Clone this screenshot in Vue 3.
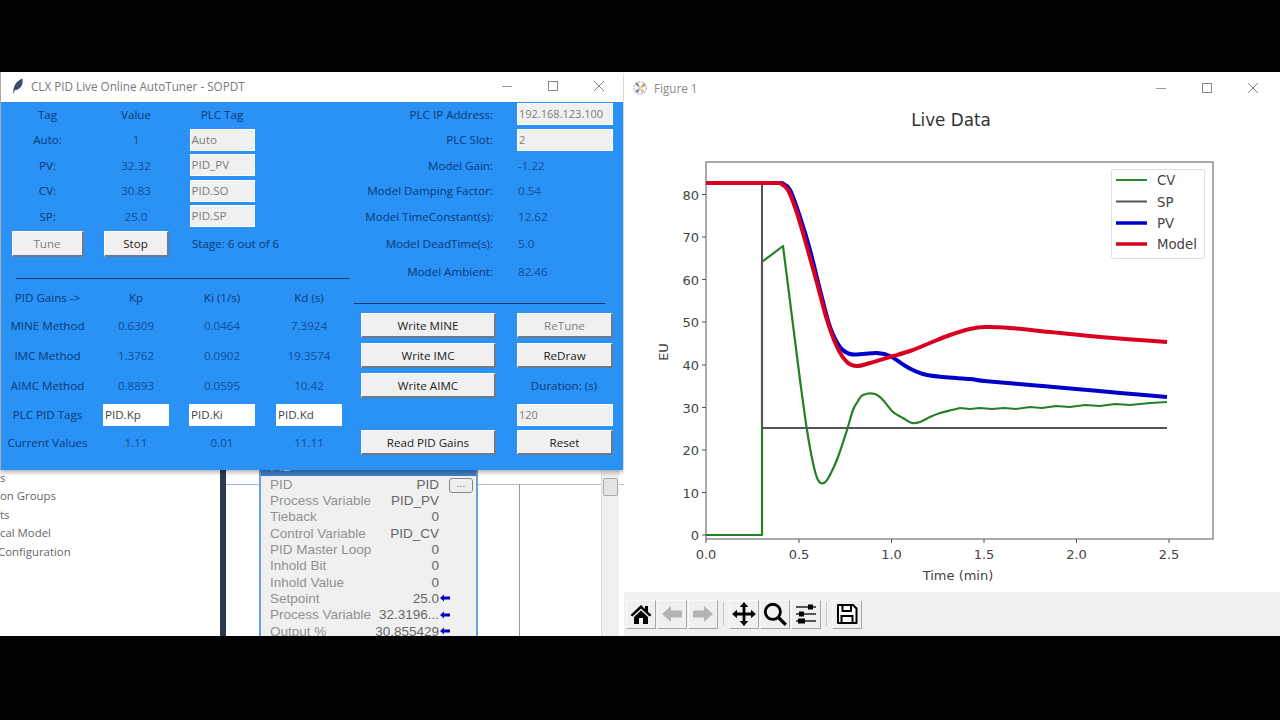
<script setup>
const yTicks = [
  { label: '0', y: 535 },
  { label: '10', y: 492.5 },
  { label: '20', y: 450 },
  { label: '30', y: 407.5 },
  { label: '40', y: 365 },
  { label: '50', y: 322 },
  { label: '60', y: 279.5 },
  { label: '70', y: 237 },
  { label: '80', y: 194.5 }
]
const xTicks = [
  { label: '0.0', x: 706 },
  { label: '0.5', x: 799 },
  { label: '1.0', x: 891.5 },
  { label: '1.5', x: 984 },
  { label: '2.0', x: 1076.5 },
  { label: '2.5', x: 1169 }
]

// catmull-rom through the points, so the traces don't look like polylines
const smooth = (str) => {
  const pts = str.split(' ').map((p) => p.split(',').map(Number))
  let d = ''
  for (let i = 0; i < pts.length - 1; i++) {
    const p0 = pts[i - 1] || pts[i]
    const p1 = pts[i]
    const p2 = pts[i + 1]
    const p3 = pts[i + 2] || p2
    const c1 = [p1[0] + (p2[0] - p0[0]) / 6, p1[1] + (p2[1] - p0[1]) / 6]
    const c2 = [p2[0] - (p3[0] - p1[0]) / 6, p2[1] - (p3[1] - p1[1]) / 6]
    d += ` C${c1[0]},${c1[1]} ${c2[0]},${c2[1]} ${p2[0]},${p2[1]}`
  }
  return d
}

const cvPath = 'M706,535 H762 V262 L783,246 L800,380' + smooth('800,380 807,430 813,463 818,480 824,483 830,475 838,457 847,430 853,410 858,401 863,395 875,394 883,400 893,412 903,418 912,423 920,422 930,417 940,413 952,410 960,408') +
  ' L970,409 980,408 992,409 1004,408 1016,409 1030,407 1042,408 1056,406 1070,407 1085,405 1100,406 1115,404 1130,405 1150,403 1167,402'
const spPath = 'M762,183 V428 H1167'
const pvPath = 'M706,183 H782' + smooth('782,183 790,190 800,217 810,250 820,290 830,327 840,347 850,354 863,354 877,353 890,356 907,367 923,374 943,377 970,379 984,381 1030,385 1076,389 1120,393 1167,397')
const modelPath = 'M706,183 H780' + smooth('780,183 788,190 797,213 807,247 817,283 827,320 837,347 847,362 857,366 870,363 890,357 910,351 930,343 950,335 970,329 985,327 1010,328 1050,332 1100,337 1167,342')

const legend = [
  { label: 'CV', color: '#2a8a2a', width: 2, y: 180 },
  { label: 'SP', color: '#555', width: 2, y: 201.5 },
  { label: 'PV', color: '#0000c8', width: 3.5, y: 223 },
  { label: 'Model', color: '#d80020', width: 3.5, y: 244 }
]

const propRows = [
  { label: 'PID', value: 'PID' },
  { label: 'Process Variable', value: 'PID_PV' },
  { label: 'Tieback', value: '0' },
  { label: 'Control Variable', value: 'PID_CV' },
  { label: 'PID Master Loop', value: '0' },
  { label: 'Inhold Bit', value: '0' },
  { label: 'Inhold Value', value: '0' },
  { label: 'Setpoint', value: '25.0', live: true },
  { label: 'Process Variable', value: '32.3196...', live: true },
  { label: 'Output %', value: '30.855429', live: true }
]
</script>

<template>
  <div class="screen">
    <div class="desktop">
      <!-- studio window behind the tuner -->
      <div class="studio">
        <div class="tree">
          <div>s</div>
          <div>on Groups</div>
          <div>ts</div>
          <div>cal Model</div>
          <div class="tree-cut">Configuration</div>
        </div>
        <div class="splitter"></div>
        <div class="gutter"></div>
        <div class="props">
          <div class="props-head">PID</div>
          <div v-for="p in propRows" :key="p.label + p.value" class="prop-row">
            <span class="prop-label">{{ p.label }}</span>
            <span class="prop-value">{{ p.value }}</span>
            <svg v-if="p.live" class="prop-arrow" viewBox="0 0 10 8" width="10" height="8">
              <path d="M0 4 L4 0.5 V2.5 H10 V5.5 H4 V7.5 Z" fill="#0000c0" />
            </svg>
          </div>
          <div class="dots">...</div>
        </div>
        <div class="ladder">
          <div class="rung"></div>
          <div class="rail"></div>
          <div class="scroll"><div class="thumb"></div></div>
        </div>
      </div>

      <!-- tuner window -->
      <div class="tuner">
        <div class="titlebar">
          <svg class="app-icon" viewBox="0 0 12 16" width="12" height="16">
            <path d="M1.5 15.5 C0.8 10 3 3 10.5 0.5 C11.5 6 9 11 4 12 L2.8 12 L1.9 15.5 Z" fill="#34506e" />
          </svg>
          <span class="title-text">CLX PID Live Online AutoTuner - SOPDT</span>
          <div class="controls">
            <svg viewBox="0 0 46 16" width="46" height="16"><path d="M18 8.5 H28" stroke="#999" fill="none" /></svg>
            <svg viewBox="0 0 46 16" width="46" height="16"><rect x="18.5" y="3.5" width="9" height="9" stroke="#888" fill="none" /></svg>
            <svg viewBox="0 0 46 16" width="46" height="16"><path d="M18 3 L28 13 M28 3 L18 13" stroke="#888" fill="none" /></svg>
          </div>
        </div>
        <div class="tuner-grid">
          <div class="cell">Tag</div>
          <div class="cell">Value</div>
          <div class="cell">PLC Tag</div>
          <div></div>
          <div class="cell right">PLC IP Address:</div>
          <div class="cell"><div class="entry wide">192.168.123.100</div></div>

          <div class="cell">Auto:</div>
          <div class="cell val">1</div>
          <div class="cell"><div class="entry">Auto</div></div>
          <div></div>
          <div class="cell right">PLC Slot:</div>
          <div class="cell"><div class="entry wide">2</div></div>

          <div class="cell">PV:</div>
          <div class="cell val">32.32</div>
          <div class="cell"><div class="entry">PID_PV</div></div>
          <div></div>
          <div class="cell right">Model Gain:</div>
          <div class="cell left val">-1.22</div>

          <div class="cell">CV:</div>
          <div class="cell val">30.83</div>
          <div class="cell"><div class="entry">PID.SO</div></div>
          <div></div>
          <div class="cell right">Model Damping Factor:</div>
          <div class="cell left val">0.54</div>

          <div class="cell">SP:</div>
          <div class="cell val">25.0</div>
          <div class="cell"><div class="entry">PID.SP</div></div>
          <div></div>
          <div class="cell right">Model TimeConstant(s):</div>
          <div class="cell left val">12.62</div>

          <div class="cell"><div class="btn off tune">Tune</div></div>
          <div class="cell"><div class="btn stop">Stop</div></div>
          <div class="cell stage">Stage: 6 out of 6</div>
          <div class="cell right">Model DeadTime(s):</div>
          <div class="cell left val">5.0</div>

          <div class="rule-left"></div>
          <div class="cell right">Model Ambient:</div>
          <div class="cell left val">82.46</div>

          <div class="cell">PID Gains -&gt;</div>
          <div class="cell">Kp</div>
          <div class="cell">Ki (1/s)</div>
          <div class="cell">Kd (s)</div>
          <div class="rule-right"></div>

          <div class="cell">MINE Method</div>
          <div class="cell val">0.6309</div>
          <div class="cell val">0.0464</div>
          <div class="cell val">7.3924</div>
          <div class="cell"><div class="btn write">Write MINE</div></div>
          <div class="cell"><div class="btn side off">ReTune</div></div>

          <div class="cell">IMC Method</div>
          <div class="cell val">1.3762</div>
          <div class="cell val">0.0902</div>
          <div class="cell val">19.3574</div>
          <div class="cell"><div class="btn write">Write IMC</div></div>
          <div class="cell"><div class="btn side">ReDraw</div></div>

          <div class="cell">AIMC Method</div>
          <div class="cell val">0.8893</div>
          <div class="cell val">0.0595</div>
          <div class="cell val">10.42</div>
          <div class="cell"><div class="btn write">Write AIMC</div></div>
          <div class="cell">Duration: (s)</div>

          <div class="cell">PLC PID Tags</div>
          <div class="cell"><div class="entry live">PID.Kp</div></div>
          <div class="cell"><div class="entry live">PID.Ki</div></div>
          <div class="cell"><div class="entry live">PID.Kd</div></div>
          <div></div>
          <div class="cell"><div class="entry wide">120</div></div>

          <div class="cell">Current Values</div>
          <div class="cell val">1.11</div>
          <div class="cell val">0.01</div>
          <div class="cell val">11.11</div>
          <div class="cell"><div class="btn write">Read PID Gains</div></div>
          <div class="cell"><div class="btn side">Reset</div></div>
        </div>
      </div>

      <!-- matplotlib window -->
      <div class="figure">
        <div class="titlebar fig-bar">
          <svg class="app-icon" viewBox="0 0 16 16" width="16" height="16">
            <circle cx="8" cy="8" r="6.5" fill="#f4f4f4" stroke="#aaa" stroke-dasharray="2 1.5" />
            <path d="M8 8 L12 2.5 L14 6 Z" fill="#c9a06a" />
            <path d="M8 8 L3 4 L5.5 2.2 Z" fill="#8b7d6b" />
            <path d="M8 8 L6 13 L2.8 11 Z" fill="#7a8da0" />
            <path d="M8 8 L12.5 11 L10 13.5 Z" fill="#d8b88a" />
          </svg>
          <span class="title-text fig-title">Figure 1</span>
          <div class="controls fig-controls">
            <svg viewBox="0 0 46 16" width="46" height="16"><path d="M18 8.5 H28" stroke="#999" fill="none" /></svg>
            <svg viewBox="0 0 46 16" width="46" height="16"><rect x="18.5" y="3.5" width="9" height="9" stroke="#888" fill="none" /></svg>
            <svg viewBox="0 0 46 16" width="46" height="16"><path d="M18 3 L28 13 M28 3 L18 13" stroke="#888" fill="none" /></svg>
          </div>
        </div>
        <svg class="plot" viewBox="624 102 656 490" width="656" height="490">
          <text x="951" y="126" class="plot-title" text-anchor="middle">Live Data</text>
          <rect x="706" y="162" width="507" height="377" fill="#fff" stroke="#555" stroke-width="1" />

          <g v-for="t in yTicks" :key="t.label">
            <line x1="702" x2="706" :y1="t.y" :y2="t.y" stroke="#555" />
            <text x="699" :y="t.y + 5" class="tick" text-anchor="end">{{ t.label }}</text>
          </g>
          <g v-for="t in xTicks" :key="t.label">
            <line :x1="t.x" :x2="t.x" y1="539" y2="543" stroke="#555" />
            <text :x="t.x" y="559" class="tick" text-anchor="middle">{{ t.label }}</text>
          </g>
          <text x="958" y="580" class="tick" text-anchor="middle">Time (min)</text>
          <text class="tick" text-anchor="middle" transform="translate(668 352) rotate(-90)">EU</text>

          <path :d="cvPath" fill="none" stroke="#248024" stroke-width="2.2" stroke-linejoin="round" />
          <path :d="spPath" fill="none" stroke="#555" stroke-width="2" />
          <path :d="pvPath" fill="none" stroke="#0000c8" stroke-width="4" stroke-linejoin="round" />
          <path :d="modelPath" fill="none" stroke="#d80020" stroke-width="4" stroke-linejoin="round" />

          <rect x="1111.5" y="169.5" width="93" height="89" rx="2" fill="#fff" stroke="#ddd" />
          <g v-for="l in legend" :key="l.label">
            <line x1="1116" x2="1147" :y1="l.y" :y2="l.y" :stroke="l.color" :stroke-width="l.width" />
            <text x="1157" :y="l.y + 5" class="tick legend">{{ l.label }}</text>
          </g>
        </svg>

        <div class="toolbar">
          <div class="tool">
            <svg viewBox="0 0 24 24" width="24" height="24">
              <path d="M12 3 L1.5 13 L3.5 14.5 L12 6.5 L20.5 14.5 L22.5 13 L19 9.7 V4 H16 V7 Z" fill="#000" />
              <path d="M5 15 L12 8.5 L19 15 V22 H14 V16 H10 V22 H5 Z" fill="#000" />
            </svg>
          </div>
          <div class="tool">
            <svg viewBox="0 0 24 24" width="24" height="24">
              <path d="M2 12 L11 4 V8.5 H22 V15.5 H11 V20 Z" fill="#b4b4b4" />
            </svg>
          </div>
          <div class="tool">
            <svg viewBox="0 0 24 24" width="24" height="24">
              <path d="M22 12 L13 4 V8.5 H2 V15.5 H13 V20 Z" fill="#b4b4b4" />
            </svg>
          </div>
          <div class="sep"></div>
          <div class="tool">
            <svg viewBox="0 0 24 24" width="26" height="26">
              <path d="M12 1 L16 5.5 H13.3 V10.7 H18.5 V8 L23 12 L18.5 16 V13.3 H13.3 V18.5 H16 L12 23 L8 18.5 H10.7 V13.3 H5.5 V16 L1 12 L5.5 8 V10.7 H10.7 V5.5 H8 Z" fill="#000" />
            </svg>
          </div>
          <div class="tool">
            <svg viewBox="0 0 24 24" width="26" height="26">
              <circle cx="10" cy="10" r="7" fill="none" stroke="#000" stroke-width="2.6" />
              <path d="M15 15 L22 22" stroke="#000" stroke-width="3" fill="none" />
            </svg>
          </div>
          <div class="tool">
            <svg viewBox="0 0 24 24" width="24" height="24">
              <path d="M2 5 H22 M2 12 H22 M2 19 H22" stroke="#222" stroke-width="1.6" fill="none" />
              <rect x="14" y="2.5" width="5" height="5" fill="#000" />
              <rect x="5" y="9.5" width="5" height="5" fill="#000" />
              <rect x="4" y="16.5" width="7" height="5" fill="#000" />
            </svg>
          </div>
          <div class="sep"></div>
          <div class="tool">
            <svg viewBox="0 0 24 24" width="24" height="24">
              <path d="M3 3 H18 L21.5 6.5 V21 H3 Z" fill="#fff" stroke="#000" stroke-width="2" stroke-linejoin="round" />
              <path d="M7.5 3 V9 H16 V3" fill="none" stroke="#000" stroke-width="2" />
              <rect x="6.5" y="14" width="11" height="7" fill="none" stroke="#000" stroke-width="2" />
            </svg>
          </div>
        </div>
      </div>
    </div>
  </div>
</template>

<style>
html,
body {
  margin: 0;
  background: #000;
}
</style>

<style scoped>
.screen {
  width: 1280px;
  height: 720px;
  background: #000;
  padding-top: 72px;
  box-sizing: border-box;
  font-family: "Open Sans", "Noto Sans", sans-serif;
}

.desktop {
  position: relative;
  width: 1280px;
  height: 564px;
  overflow: hidden;
  background: #fff;
}

/* windows on the desktop */
.studio {
  position: absolute;
  left: 0;
  top: 392px;
  width: 624px;
  height: 172px;
  display: flex;
  background: #fff;
}

.tree {
  width: 220px;
  padding-top: 5px;
  font-size: 11.4px;
  line-height: 18.4px;
  color: #666;
  white-space: nowrap;
  overflow: hidden;
}

.tree-cut {
  margin-left: -2px;
}

.splitter {
  width: 6px;
  background: #2c3a50;
}

.gutter {
  width: 33px;
  background: linear-gradient(#fff 20px, #9db8d8 20px, #9db8d8 21px, #fff 21px);
}

.props {
  position: relative;
  width: 219px;
  background: #f0f0f0;
  border-left: 2px solid #6ba0d8;
  border-right: 2px solid #6ba0d8;
  box-sizing: border-box;
  font-family: "Liberation Sans", Arial, sans-serif;
  font-size: 13.5px;
}

.props-head {
  height: 12px;
  background: #3f7fc8;
  color: #cfe0f4;
  overflow: hidden;
  line-height: 6px;
  padding-left: 9px;
}

.prop-row {
  display: flex;
  align-items: center;
  height: 16.35px;
  padding-left: 9px;
  position: relative;
  white-space: nowrap;
}

.prop-label {
  color: #909090;
}

.prop-value {
  position: absolute;
  right: 37px;
  color: #666;
}

.prop-arrow {
  position: absolute;
  right: 26px;
  top: 4px;
}

.dots {
  position: absolute;
  left: 188px;
  top: 14px;
  width: 22px;
  height: 13px;
  border: 1px solid #888;
  border-radius: 3px;
  background: #eee;
  font-size: 10px;
  line-height: 10px;
  text-align: center;
  color: #666;
}

.ladder {
  position: relative;
  flex: 1;
  background: #fff;
}

.rung {
  position: absolute;
  left: 0;
  right: 0;
  top: 20px;
  border-top: 1px solid #bbb;
}

.rail {
  position: absolute;
  left: 41px;
  top: 20px;
  bottom: 0;
  border-left: 1px solid #999;
}

.scroll {
  position: absolute;
  left: 123px;
  width: 18px;
  top: 0;
  bottom: 0;
  background: #f0f0f0;
  border-left: 1px solid #ddd;
  box-sizing: border-box;
}

.thumb {
  margin: 14px 1px 0;
  height: 16px;
  background: #e4e4e4;
  border: 1px solid #aaa;
  border-radius: 2px;
}

.tuner {
  position: absolute;
  left: 0;
  top: 0;
  width: 623px;
  box-sizing: border-box;
  border-left: 1px solid #aaa;
  box-shadow: 0 2px 5px rgba(0, 0, 0, 0.35);
  background: #2a91f5;
}

.figure {
  position: absolute;
  left: 624px;
  top: 0;
  width: 656px;
  height: 564px;
  background: #fff;
  display: flex;
  flex-direction: column;
}

.titlebar {
  height: 30px;
  background: #fff;
  display: flex;
  align-items: center;
  box-sizing: border-box;
  padding: 0 0 3px 11px;
}

.fig-bar {
  padding: 1px 0 0 8px;
}

.app-icon {
  flex: none;
}

.title-text {
  margin-left: 7px;
  font-size: 11.7px;
  color: #787878;
}

.fig-title {
  margin-left: 6px;
  color: #8a8a8a;
}

.controls {
  margin-left: auto;
  display: flex;
  margin-right: 1px;
}

.controls svg {
  display: block;
}

.fig-controls {
  margin-right: 4px;
}

.tuner-grid {
  display: grid;
  grid-template-columns: 93px 84px 88px 86px 153px 118px;
  grid-template-rows: 25px 26px 25px 26px 25px 30px 26px 26px 30px 30px 30px 28px 28px;
  padding-bottom: 13px;
  font-size: 11.6px;
  color: #083a78;
}

.cell {
  display: flex;
  align-items: center;
  justify-content: center;
  white-space: nowrap;
  padding-bottom: 1px;
}

.right {
  justify-content: flex-end;
  padding-right: 12px;
}

.left {
  justify-content: flex-start;
  padding-left: 13px;
}

.val {
  color: #0f4f9c;
}

.stage {
  grid-column: span 2;
  justify-content: flex-start;
  padding-left: 14px;
}

.entry {
  width: 65px;
  height: 22px;
  box-sizing: border-box;
  background: #f0f0f0;
  border: 1px solid #fff;
  padding-left: 1px;
  line-height: 20px;
  color: #7c7c7c;
}

.entry.wide {
  width: 96px;
  margin-left: 2px;
  font-size: 11px;
}

.entry.live {
  width: 66px;
  background: #fff;
  color: #444;
}

.btn {
  height: 26px;
  box-sizing: border-box;
  background: #f0f0f0;
  border-top: 1px solid #fff;
  border-left: 1px solid #fff;
  border-right: 2px solid #6c7a88;
  border-bottom: 2px solid #6c7a88;
  color: #222;
  display: flex;
  align-items: center;
  justify-content: center;
}

.btn.off {
  color: #808080;
}

.tune {
  width: 72px;
}

.stop {
  width: 65px;
}

.write {
  width: 135px;
  height: 25px;
}

.side {
  width: 96px;
  height: 25px;
  margin-left: 2px;
}

.rule-left {
  grid-column: span 4;
  height: 1px;
  background: #0c3566;
  margin: 19px 3px 0 15px;
}

.rule-right {
  grid-column: span 2;
  height: 1px;
  background: #0c3566;
  margin: 18px 18px 0 2px;
}

/* plot */
.plot {
  display: block;
  flex: none;
}

.plot-title {
  font-family: "DejaVu Sans", sans-serif;
  font-size: 16.8px;
  fill: #333;
}

.tick {
  font-family: "DejaVu Sans", sans-serif;
  font-size: 13px;
  fill: #444;
}

.legend {
  font-size: 13.3px;
}

.toolbar {
  flex: 1;
  background: #f0f0f0;
  display: flex;
  align-items: center;
  padding-left: 2px;
  gap: 1px;
}

.tool {
  width: 30px;
  height: 29px;
  box-sizing: border-box;
  border-right: 1px solid #a8a8a8;
  border-bottom: 1px solid #a8a8a8;
  border-top: 1px solid #fafafa;
  border-left: 1px solid #fafafa;
  display: flex;
  align-items: center;
  justify-content: center;
}

.sep {
  width: 1px;
  height: 24px;
  background: #c8c8c8;
  margin: 0 4px;
}
</style>
